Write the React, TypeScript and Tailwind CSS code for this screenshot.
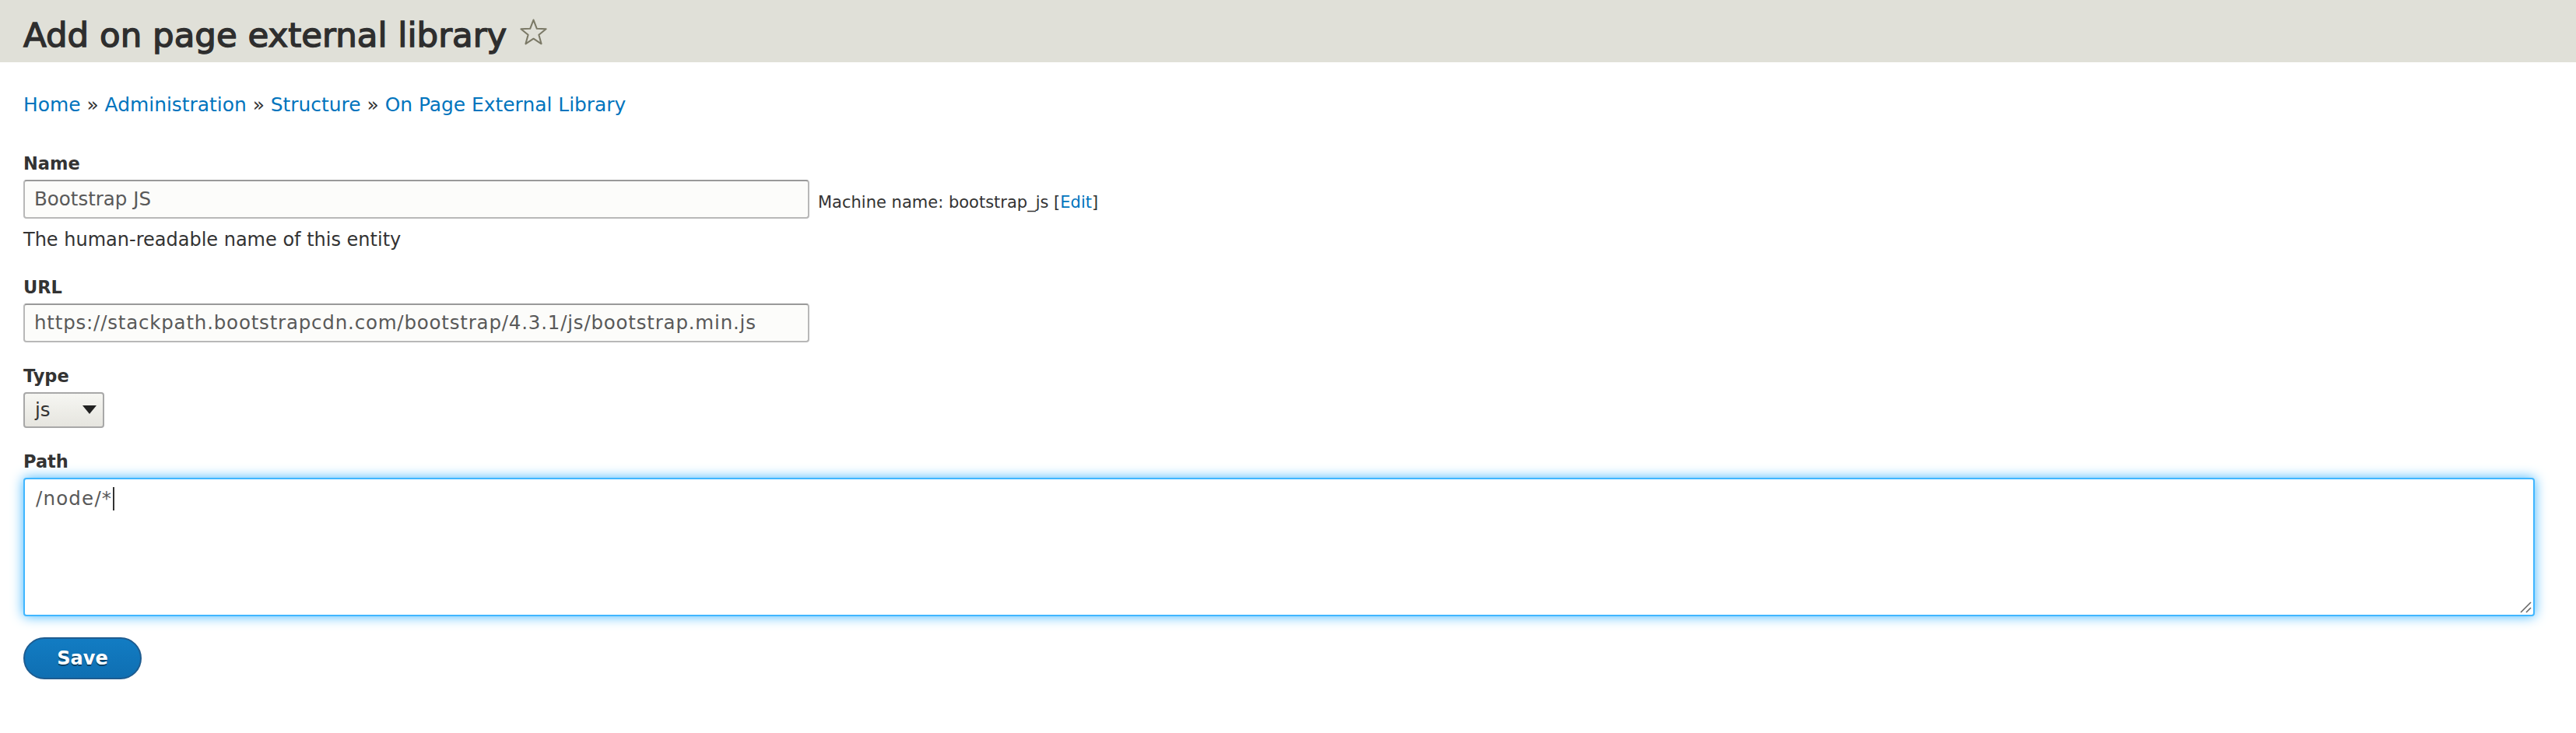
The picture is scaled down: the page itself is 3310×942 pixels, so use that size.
import React from "react";

function StarIcon() {
  return (
    <svg viewBox="0 0 36 36" className="w-[37px] h-[37px]" fill="none">
      <polygon
        points="18,2.5 22.2,13.4 33.7,13.9 24.7,21.2 27.8,32.4 18,26 8.2,32.4 11.3,21.2 2.3,13.9 13.8,13.4"
        stroke="#7b7966"
        strokeWidth="2"
        strokeLinejoin="round"
      />
    </svg>
  );
}

function ResizeGrip() {
  return (
    <svg viewBox="0 0 16 16" className="absolute right-[2px] bottom-[2px] w-[16px] h-[16px]">
      <line x1="2" y1="15" x2="15" y2="2" stroke="#666" strokeWidth="1.6" />
      <line x1="9" y1="15" x2="15" y2="9" stroke="#666" strokeWidth="1.6" />
    </svg>
  );
}

export default function App() {
  const crumbs = ["Home", "Administration", "Structure", "On Page External Library"];

  return (
    <div className="min-h-[942px] w-full bg-white text-[#333] font-['DejaVu_Sans',sans-serif]">
      {/* page header */}
      <div className="flex items-start h-[80px] px-[30px] bg-[#e0e0d8]">
        <h1 className="mt-[23px] text-[43.5px] leading-[44px] font-normal text-[#2e2e2e] [-webkit-text-stroke:1.4px_#2e2e2e]">
          Add on page external library
        </h1>
        <div className="mt-[23px] ml-[16px]">
          <StarIcon />
        </div>
      </div>

      <div className="px-[30px]">
        {/* breadcrumb */}
        <nav className="mt-[37px] text-[24.9px] leading-[36px]">
          {crumbs.map((c, i) => (
            <span key={c}>
              <a className="text-[#0074bd]">{c}</a>
              {i < crumbs.length - 1 && <span className="text-[#333]"> » </span>}
            </span>
          ))}
        </nav>

        {/* Name */}
        <div className="mt-[42px]">
          <label className="block text-[22.5px] leading-[30px] font-bold">Name</label>
          <div className="flex items-center mt-[6px]">
            <div className="flex items-center w-[1010px] h-[50px] pl-[12px] rounded-[4px] border-2 border-[#b8b8b8] border-t-[#999] bg-[#fcfcfa] text-[24.5px] text-[#595959]">
              Bootstrap JS
            </div>
            <span className="ml-[11px] pt-[8px] text-[21px] leading-[26px] text-[#333]">
              Machine name: bootstrap_js [<a className="text-[#0074bd]">Edit</a>]
            </span>
          </div>
          <p className="mt-[12px] text-[24px] leading-[30px] text-[#333]">
            The human-readable name of this entity
          </p>
        </div>

        {/* URL */}
        <div className="mt-[31px]">
          <label className="block text-[22.5px] leading-[30px] font-bold">URL</label>
          <div className="flex items-center mt-[6px] w-[1010px] h-[50px] pl-[12px] rounded-[4px] border-2 border-[#b8b8b8] border-t-[#999] bg-[#fcfcfa] text-[24.5px] tracking-[0.8px] text-[#595959]">
            https://stackpath.bootstrapcdn.com/bootstrap/4.3.1/js/bootstrap.min.js
          </div>
        </div>

        {/* Type */}
        <div className="mt-[28px]">
          <label className="block text-[22.5px] leading-[30px] font-bold">Type</label>
          <div className="flex items-center justify-between mt-[6px] w-[104px] h-[46px] pl-[13px] pr-[8px] rounded-[4px] border-2 border-[#a8a8a8] bg-gradient-to-b from-[#f6f6f2] to-[#e6e5df] text-[24.5px] text-[#333]">
            <span>js</span>
            <svg viewBox="0 0 18 12" className="w-[18px] h-[12px]">
              <polygon points="0,0 18,0 9,11" fill="#222" />
            </svg>
          </div>
        </div>

        {/* Path */}
        <div className="mt-[28px]">
          <label className="block text-[22.5px] leading-[30px] font-bold">Path</label>
          <div className="relative mt-[6px] w-[3227px] h-[178px] pl-[14px] pt-[10px] rounded-[4px] border-2 border-[#40b6ff] bg-white shadow-[0_0_16px_#40b6ff] text-[24.5px] leading-[30px] text-[#595959]">
            <span className="tracking-[1.2px]">/node/*</span>
            <span className="inline-block align-top w-[2px] h-[30px] ml-[1px] bg-[#333]" />
            <ResizeGrip />
          </div>
        </div>

        {/* actions */}
        <div className="mt-[27px]">
          <button className="flex items-center justify-center w-[152px] h-[54px] rounded-full border-2 border-[#1e5c90] bg-gradient-to-b from-[#127cc3] to-[#0f6fb2] text-[24px] font-bold text-white [text-shadow:0_2px_0_rgba(0,0,0,0.45)]">
            Save
          </button>
        </div>
      </div>
    </div>
  );
}
